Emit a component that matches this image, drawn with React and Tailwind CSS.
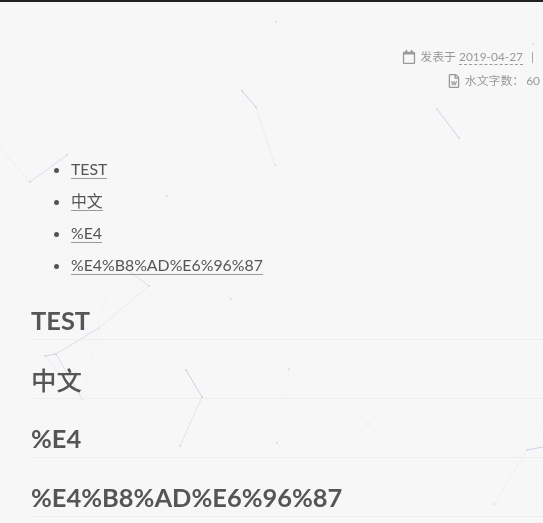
import { FaRegCalendar, FaRegFileWord } from "react-icons/fa";

const links = ["TEST", "中文", "%E4", "%E4%B8%AD%E6%96%87"];

// particle lines behind the page: x1 y1 x2 y2 colour
const lines = [
  [242, 89, 256, 105, "#c9c9ee"],
  [256, 105, 275, 163, "#ececf8"],
  [437, 107, 459, 136, "#d0d0ee"],
  [0, 146, 30, 180, "#ececf8"],
  [30, 180, 67, 153, "#dcdcf4"],
  [113, 257, 149, 284, "#dcdcf4"],
  [145, 287, 99, 326, "#e6e6f6"],
  [149, 284, 99, 326, "#f0f0f8"],
  [99, 326, 56, 352, "#dcdcf4"],
  [56, 352, 45, 354, "#d0d0ee"],
  [56, 352, 82, 397, "#dcdcf4"],
  [45, 354, 82, 397, "#ececf8"],
  [108, 285, 82, 397, "#f4f4f7"],
  [186, 368, 202, 395, "#d0d0ee"],
  [202, 395, 180, 444, "#e2e2f4"],
  [289, 367, 277, 441, "#f5f5f6"],
  [527, 448, 543, 445, "#d0d0ee"],
  [527, 448, 494, 502, "#eeeef3"],
  [543, 425, 527, 448, "#f2f2f6"],
];

const dots = [
  [276, 20], [242, 89], [256, 105], [275, 163], [437, 107], [459, 136], [533, 42],
  [30, 180], [67, 153], [167, 194], [149, 284], [99, 326], [45, 354], [56, 352],
  [82, 397], [231, 297], [186, 368], [202, 395], [180, 444], [277, 441], [289, 367],
  [368, 422], [527, 448], [494, 502],
];

function Particles() {
  return (
    <svg className="absolute inset-0 pointer-events-none" width="543" height="523">
      {lines.map(([x1, y1, x2, y2, c], i) => (
        <line key={i} x1={x1} y1={y1} x2={x2} y2={y2} stroke={c} strokeWidth="1" />
      ))}
      {dots.map(([x, y], i) => (
        <rect key={i} x={x - 0.5} y={y - 0.5} width="1" height="1" fill="#a8a8b4" />
      ))}
      <rect x="431" y="521" width="2" height="2" fill="#222" />
    </svg>
  );
}

export default function App() {
  return (
    <div className="relative h-[523px] w-[543px] overflow-hidden border-t-2 border-[#222] bg-[#f7f7f7] font-['Lato','Noto_Sans_CJK_SC',sans-serif] text-[#555]">
      <Particles />
      <div className="relative flex flex-col will-change-transform">
        <div className="mt-[43px] flex flex-col items-end pr-[3px] text-[11.9px] leading-6 text-[#999]">
          <div className="flex items-center">
            <FaRegCalendar size={14} className="mr-[4px]" />
            <span className="mr-[3px]">发表于</span>
            <span className="border-b border-dashed border-[#999] leading-[14px] mr-[8px]">2019-04-27</span>
            <span className="mr-[6px]">|</span>
          </div>
          <div className="flex items-center">
            <FaRegFileWord size={14} className="mr-[4px]" />
            <span className="mr-[2px]">水文字数：</span>
            <span>60</span>
          </div>
        </div>

        <ul className="mt-[60px] list-disc pl-[71px] text-[15.85px]">
          {links.map((t) => (
            <li key={t} className="h-8 leading-8">
              <a className="border-b border-[#999]">{t}</a>
            </li>
          ))}
        </ul>

        <div className="pl-[31px]">
          {links.map((t) => (
            <h2 key={t} className="flex h-[59px] items-end border-b border-[#eee] pb-px text-[25.45px] font-bold leading-[36px]">
              {t === "中文" ? <span className="mb-[-1px] font-medium">{t}</span> : t}
            </h2>
          ))}
        </div>
      </div>
    </div>
  );
}
